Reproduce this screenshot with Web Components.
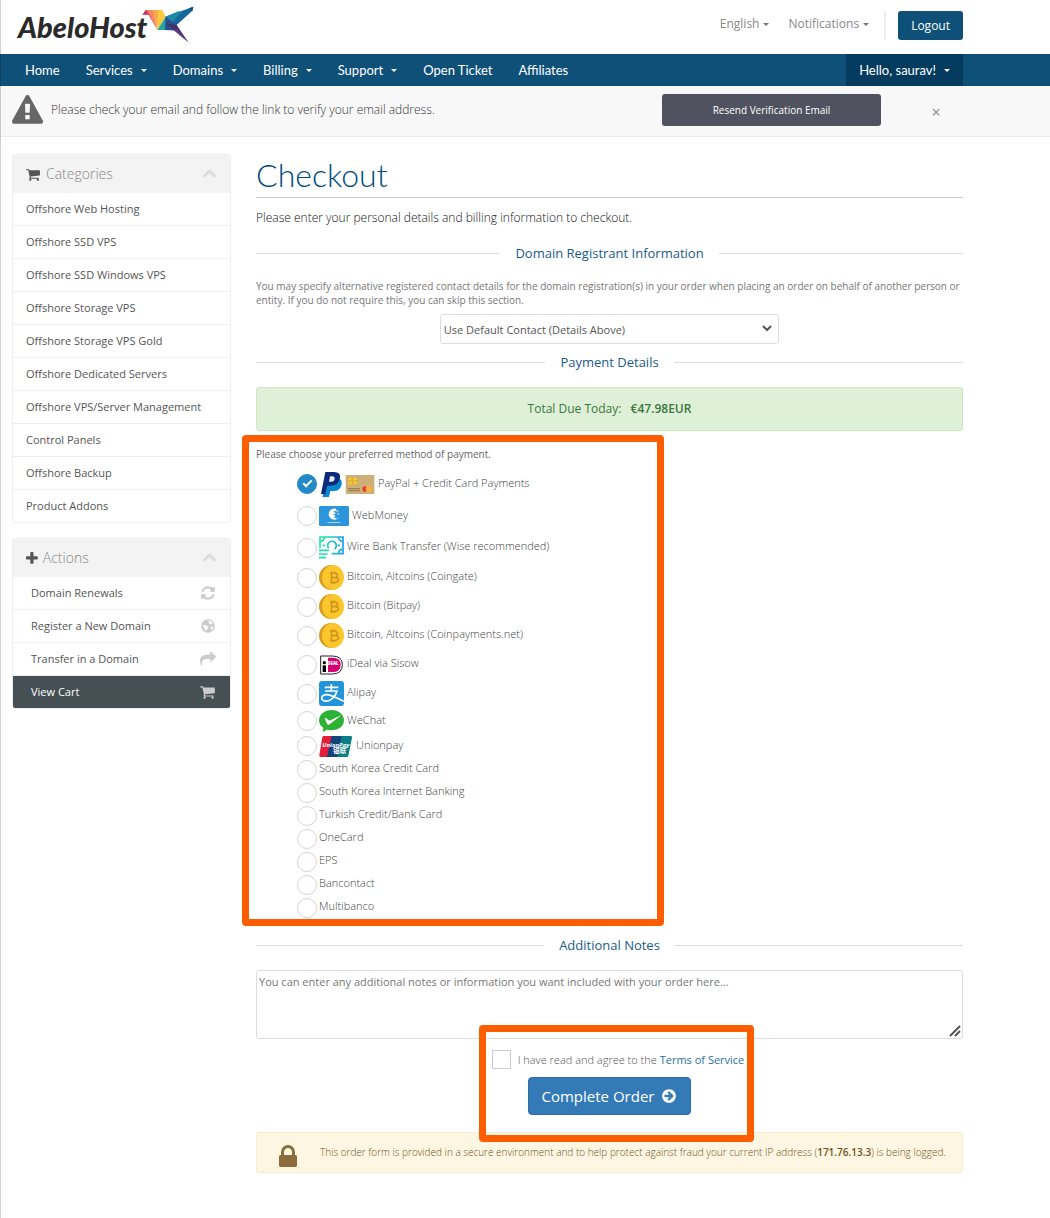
<!DOCTYPE html>
<html lang="en">
<head>
<meta charset="utf-8">
<meta name="viewport" content="width=device-width, initial-scale=1">
<title>Checkout - AbeloHost</title>
<style>
  body {
    margin: 0;
    background: #fff;
    color: #333;
    font-family: "Open Sans", "Noto Sans", sans-serif;
    font-size: 12px;
    line-height: 18px;
  }
</style>
</head>
<body>
<checkout-page></checkout-page>

<script>
const ICONS = {
  cart: 'M640 1536q0 52-38 90t-90 38-90-38-38-90 38-90 90-38 90 38 38 90zm896 0q0 52-38 90t-90 38-90-38-38-90 38-90 90-38 90 38 38 90zm128-1088v512q0 24-16.500 42.500t-40.500 21.500l-1044 122q13 60 13 70 0 16-24 64h920q26 0 45 19t19 45-19 45-45 19h-1024q-26 0-45-19t-19-45q0-11 8-31.500t16-36 21.500-40 15.500-29.500l-177-823h-204q-26 0-45-19t-19-45 19-45 45-19h256q16 0 28.500 6.500t19.500 15.500 13 24.500 8 26 5.500 29.500 4.500 26h1201q26 0 45 19t19 45z',
  plus: 'M1600 736v192q0 40-28 68t-68 28h-416v416q0 40-28 68t-68 28h-192q-40 0-68-28t-28-68v-416h-416q-40 0-68-28t-28-68v-192q0-40 28-68t68-28h416v-416q0-40 28-68t68-28h192q40 0 68 28t28 68v416h416q40 0 68 28t28 68z',
  refresh: 'M1639 1056q0 5-1 7-64 268-268 434.500t-478 166.500q-146 0-282.500-55t-243.500-157l-129 129q-19 19-45 19t-45-19-19-45v-448q0-26 19-45t45-19h448q26 0 45 19t19 45-19 45l-137 137q71 66 161 102t187 36q134 0 250-65t186-179q11-17 53-117 8-23 30-23h192q13 0 22.500 9.500t9.500 22.500zm25-800v448q0 26-19 45t-45 19h-448q-26 0-45-19t-19-45 19-45l138-138q-148-137-349-137-134 0-250 65t-186 179q-11 17-53 117-8 23-30 23h-199q-13 0-22.500-9.500t-9.500-22.500v-7q65-268 270-434.500t480-166.500q146 0 284 55.500t245 156.500l130-129q19-19 45-19t45 19 19 45z',
  globe: 'M896 128a768 768 0 1 0 0 1536a768 768 0 1 0 0-1536zM980 290L1180 340L1330 450L1440 620L1300 700L1180 640L1080 720L960 620L1060 500L940 420zM400 760L620 800L800 900L960 1020L880 1180L740 1280L700 1440L560 1360L520 1160L390 1000L340 860zM1240 980L1430 900L1480 1000L1400 1220L1260 1360L1180 1180z',
  share: 'M1792 640q0 26-19 45l-512 512q-19 19-45 19t-45-19-19-45v-256h-224q-98 0-175.500 6t-154 21.500-133 42.500-105.500 69.500-80 101-48.500 138.500-17.500 181q0 55 5 123 0 6 2.500 23.500t2.500 26.500q0 15-8.500 25t-23.500 10q-16 0-28-17-7-9-13-22t-13.500-30-10.500-24q-127-285-127-451 0-199 53-333 162-403 875-403h224v-256q0-26 19-45t45-19 45 19l512 512q19 19 19 45z',
  warning: 'M1024 1375v-190q0-14-9.500-23.500t-22.500-9.500h-192q-13 0-22.500 9.500t-9.500 23.500v190q0 14 9.500 23.500t22.500 9.500h192q13 0 22.500-9.500t9.500-23.500zm-2-374l18-459q0-12-10-19-13-11-24-11h-220q-11 0-24 11-10 7-10 21l17 457q0 10 10 16.500t24 6.500h185q14 0 23.500-6.500t10.500-16.500zm-14-934l768 1408q35 63-2 126-17 29-46.500 46t-63.500 17h-1536q-34 0-63.500-17t-46.500-46q-37-63-2-126l768-1408q17-31 47-49t65-18 65 18 47 49z',
  lock: 'M640 768h512v-192q0-106-75-181t-181-75-181 75-75 181v192zm832 96v576q0 40-28 68t-68 28h-960q-40 0-68-28t-28-68v-576q0-40 28-68t68-28h32v-192q0-184 132-316t316-132 316 132 132 316v192h32q40 0 68 28t28 68z',
  arrow: 'M1413 896q0-27-18-45l-91-91-362-362q-18-18-45-18t-45 18l-91 91q-18 18-18 45t18 45l189 189h-502q-26 0-45 19t-19 45v128q0 26 19 45t45 19h502l-189 189q-18 18-18 45t18 45l91 91q18 18 45 18t45-18l362-362 91-91q18-18 18-45zm251 0q0 209-103 385.500t-279.500 279.500-385.500 103-385.500-103-279.500-279.500-103-385.500 103-385.500 279.500-279.500 385.500-103 385.500 103 279.500 279.500 103 385.500z',
  chevron: 'M1683 1331l-166 165q-19 19-45 19t-45-19l-531-531-531 531q-19 19-45 19t-45-19l-166-165q-19-19-19-45.500t19-45.500l742-741q19-19 45-19t45 19l742 741q19 19 19 45.500t-19 45.500z'
};

// Glyphs that are narrower than the square box
const ICON_BOXES = { plus: '192 0 1408 1792' };

// Single colour icon, sized with --icon-size and coloured by the current text colour
class FaIcon extends HTMLElement {
  constructor() {
    super();
    this.attachShadow({ mode: 'open' });
  }

  connectedCallback() {
    const name = this.getAttribute('name');
    this.shadowRoot.innerHTML = `
      <style>
        :host { display: inline-block; }
        svg { display: block; height: var(--icon-size, 15px); fill: currentColor; }
      </style>
      <svg viewBox="${ICON_BOXES[name] || '0 0 1792 1792'}" aria-hidden="true"><path fill-rule="evenodd" d="${ICONS[name]}"/></svg>
    `;
  }
}
customElements.define('fa-icon', FaIcon);

// Logo, language and notification menus, logout
class SiteHeader extends HTMLElement {
  constructor() {
    super();
    this.attachShadow({ mode: 'open' });
  }

  connectedCallback() {
    this.shadowRoot.innerHTML = `
      <style>
        :host { display: block; }
        .bar { display: flex; align-items: flex-start; justify-content: space-between; max-width: 963px; height: 54px; }
        .logo { display: flex; padding: 6px 0 0 18px; color: #2b2a2b; text-decoration: none; font: italic 900 29px/41px Lato, sans-serif; }
        .logo svg { width: 52px; height: 37px; margin-left: -5px; }
        .tools { display: flex; align-items: flex-start; padding-top: 11px; }
        .menu { display: flex; align-items: center; gap: 4px; margin-right: 19px; padding: 0; border: 0; background: none; color: #888; font: inherit; line-height: 26px; }
        .menu::after { content: ""; border: 3px solid transparent; border-top-color: #777; border-bottom: 0; }
        .logout { margin-left: -4px; padding-left: 12px; border-left: 2px solid #eee; }
        .logout button { display: block; height: 29px; padding: 0 13px; border: 0; border-radius: 3px; background: #0f5078; color: #fff; font: inherit; }
      </style>
      <div class="bar">
        <a class="logo" href="#">AbeloHost<svg viewBox="426 18 156 111" aria-hidden="true">
          <path fill="#c9285e" d="M427 44l10-14 14 14z"/>
          <path fill="#ee5a66" d="M437 30h8l27 60z"/>
          <path fill="#f58a5c" d="M444 30h16l12 60z"/>
          <path fill="#f9a74a" d="M459 30h16l-3 60z"/>
          <path fill="#fbc93c" d="M474 30h13l10 20-25 40z"/>
          <path fill="#25a8a2" d="M497 50l-25 40h23l22-20z"/>
          <path fill="#1c86a6" d="M497 50l42-18-22 40-22 18z"/>
          <path fill="#17669c" d="M497 50l83-30-3 12-47 43-22-9z"/>
          <path fill="#1c8aa5" d="M497 50l48-17-28 36z"/>
          <path fill="#164a83" d="M566 25l14-5-3 14z"/>
          <path fill="#2f4d8c" d="M497 50l33 25 8 17-43-2z"/>
          <path fill="#443070" d="M500 72l30 3 35 52-44-37z"/>
          <path fill="#6b3c7c" d="M521 90l10-2 34 39z"/>
        </svg></a>
        <div class="tools">
          <button class="menu">English</button>
          <button class="menu">Notifications</button>
          <div class="logout"><button>Logout</button></div>
        </div>
      </div>
    `;
  }
}
customElements.define('site-header', SiteHeader);

// Main navigation bar
class SiteNav extends HTMLElement {
  constructor() {
    super();
    this.attachShadow({ mode: 'open' });
  }

  connectedCallback() {
    const items = [['Home'], ['Services', 1], ['Domains', 1], ['Billing', 1], ['Support', 1], ['Open Ticket'], ['Affiliates']];
    const link = ([label, menu]) => `<a href="#"${menu ? ' class="menu"' : ''}>${label}</a>`;
    this.shadowRoot.innerHTML = `
      <style>
        :host { display: block; background: #0f5078; font: 13px/32px Lato, sans-serif; }
        nav { display: flex; max-width: 951px; margin-left: 12px; }
        a { display: flex; align-items: center; gap: 8px; padding: 0 13px; color: #fff; text-decoration: none; }
        .menu::after { content: ""; border: 3px solid transparent; border-top-color: #fff; border-bottom: 0; }
        .user { margin-left: auto; }
        .user a { background: #053b5e; }
      </style>
      <nav>${items.map(link).join('')}<div class="user">${link(['Hello, saurav!', 1])}</div></nav>
    `;
  }
}
customElements.define('site-nav', SiteNav);

// Reminder to verify the account email
class VerifyBanner extends HTMLElement {
  constructor() {
    super();
    this.attachShadow({ mode: 'open' });
  }

  connectedCallback() {
    this.shadowRoot.innerHTML = `
      <style>
        :host { display: block; background: #f8f8f8; border-bottom: 1px solid #e9e9e9; }
        .row { display: flex; align-items: flex-start; max-width: 951px; height: 50px; margin-left: 12px; }
        fa-icon { --icon-size: 31px; margin-top: 9px; color: #666; }
        p { flex: 1; margin: 15px 0 0 8px; font-weight: 300; }
        .resend { width: 219px; height: 32px; margin-top: 8px; border: 0; border-radius: 3px; background: #50525f; color: #fff; font: 10px "Open Sans", sans-serif; }
        .close { width: 20px; margin: 15px 17px 0 45px; padding: 0; border: 0; background: none; color: #888; font: 16px/22px "Open Sans", sans-serif; }
      </style>
      <div class="row">
        <fa-icon name="warning"></fa-icon>
        <p><slot></slot></p>
        <button class="resend">Resend Verification Email</button>
        <button class="close" aria-label="Close">×</button>
      </div>
    `;
  }
}
customElements.define('verify-banner', VerifyBanner);

// Sidebar panel: a header with an icon over a list of links
class SidePanel extends HTMLElement {
  constructor() {
    super();
    this.attachShadow({ mode: 'open' });
  }

  connectedCallback() {
    this.shadowRoot.innerHTML = `
      <style>
        :host { display: block; border: 1px solid #eee; border-radius: 3px; overflow: hidden; }
        header { display: flex; align-items: center; height: 38px; padding: 0 13px; background: #f3f3f3; color: #555; }
        h3 { flex: 1; margin: 0 0 0 5px; color: #888; font-size: 14px; font-weight: 300; }
        .toggle { padding: 0; border: 0; background: none; color: #ddd; }
      </style>
      <header>
        <fa-icon name="${this.getAttribute('icon')}"></fa-icon>
        <h3>${this.getAttribute('heading')}</h3>
        <button class="toggle" aria-label="Toggle"><fa-icon name="chevron"></fa-icon></button>
      </header>
      <slot></slot>
    `;
  }
}
customElements.define('side-panel', SidePanel);

// One link of a side panel, with an optional icon at its end
class PanelLink extends HTMLElement {
  constructor() {
    super();
    this.attachShadow({ mode: 'open' });
  }

  connectedCallback() {
    const icon = this.getAttribute('icon');
    this.shadowRoot.innerHTML = `
      <style>
        :host { display: block; border-bottom: 1px solid #eee; font-size: 11px; }
        :host(:last-child) { border-bottom: 0; }
        :host([active]) { background: #464f54; }
        a { display: flex; align-items: center; justify-content: space-between; height: 32px; padding: 0 13px; color: #555; text-decoration: none; }
        :host([icon]) a { padding: 0 14px 0 18px; }
        :host([active]) a { color: #fff; }
        fa-icon { color: #ccc; --icon-size: 16px; }
      </style>
      <a href="#"><slot></slot>${icon ? `<fa-icon name="${icon}"></fa-icon>` : ''}</a>
    `;
  }
}
customElements.define('panel-link', PanelLink);

// Centred heading between two rules
class SectionTitle extends HTMLElement {
  constructor() {
    super();
    this.attachShadow({ mode: 'open' });
  }

  connectedCallback() {
    this.shadowRoot.innerHTML = `
      <style>
        :host { display: block; }
        h2 { display: flex; align-items: center; gap: 15px; margin: 0; color: #1a5a88; font-size: 13px; font-weight: 400; line-height: 18px; }
        h2::before, h2::after { content: ""; flex: 1; border-top: 1px solid #ddd; }
      </style>
      <h2><slot></slot></h2>
    `;
  }
}
customElements.define('section-title', SectionTitle);

// Draws a thick marker frame over what it wraps
class MarkerFrame extends HTMLElement {
  constructor() {
    super();
    this.attachShadow({ mode: 'open' });
  }

  connectedCallback() {
    this.shadowRoot.innerHTML = `
      <style>
        :host { display: block; position: relative; }
        .frame { position: absolute; inset: var(--frame-inset, -12px); border: 7px solid #ff5e00; border-radius: 4px; pointer-events: none; z-index: 1; }
      </style>
      <slot></slot>
      <div class="frame"></div>
    `;
  }
}
customElements.define('marker-frame', MarkerFrame);

const COIN = `<svg width="25" height="25" viewBox="0 0 50 50" aria-hidden="true">
  <ellipse cx="24" cy="25" rx="24" ry="25" fill="#d99c1c"/>
  <ellipse cx="28" cy="25" rx="22" ry="25" fill="#fcc62d"/>
  <path fill="none" stroke="#cf921a" stroke-width="3" d="M22 16h9q6 1 6 5t-6 4h-7m7 0q8 1 8 5t-8 5h-9m3-19v19m1-22v3m5-3v3m-5 19v3m5-3v3"/>
</svg>`;

const METHODS = [
  { label: 'PayPal + Credit Card Payments', row: 32, art: `<svg width="56" height="25" viewBox="0 0 168 75" aria-hidden="true">
    <path fill="#0a86cc" d="M26 22h38q7 7 3 19-5 16-24 16h-9l-4 18h-20z"/>
    <path fill="#0b2a7a" d="M19 0h26q21 0 18 19-4 22-27 22h-12l-5 25h-13z"/>
    <path fill="#fff" d="M33 13l-3 16h7q9 0 10-9 0-7-8-7z" opacity=".9"/>
    <rect x="80" y="9" width="86" height="57" rx="2" fill="#cdb077"/>
    <rect x="88" y="18" width="26" height="19" rx="3" fill="#fbc92f"/>
    <path stroke="#b98a2a" stroke-width="2" d="M88 27h9m8 0h9M100 18v19"/>
    <path stroke="#6e5b36" stroke-width="2" d="M87 50h36M87 56h36"/>
    <circle cx="138" cy="51" r="8" fill="#e8392f"/><circle cx="149" cy="51" r="9" fill="#fbb03b"/>
  </svg>` },
  { label: 'WebMoney', row: 32, art: `<svg width="30" height="20" viewBox="0 0 90 60" aria-hidden="true">
    <rect width="90" height="60" rx="4" fill="#2d95dc"/>
    <path fill="#fff" d="M51 8a17 17 0 1 0 9 26l-7 4-9-5 6-2-8-7 9-1-8-7 9-1z"/>
    <path fill="#fff" d="M52 12l7 4-5 2zM55 21l7 3-6 2z"/>
    <text x="25" y="51" font-family="Open Sans, sans-serif" font-size="7" font-weight="700" fill="#fff">WebMoney</text>
  </svg>` },
  { label: 'Wire Bank Transfer (Wise recommended)', row: 31, art: `<svg width="25" height="23" viewBox="0 0 75 69" aria-hidden="true">
    <defs><linearGradient id="wire" gradientUnits="userSpaceOnUse" x1="0" y1="0" x2="75" y2="0"><stop offset="0" stop-color="#22ee9c"/><stop offset="1" stop-color="#1c9cf0"/></linearGradient></defs>
    <g fill="none" stroke="url(#wire)" stroke-width="5">
      <path d="M3 36V3h69v50H38"/><path d="M16 4q0 12-12 12M59 4q0 12 12 12M59 52q0-12 12-12"/>
      <path d="M29 37a13 13 0 1 1 18 2"/><path d="M11 28h7M56 28h7"/>
    </g>
    <path fill="none" stroke="#1fe0a8" stroke-width="5" d="M0 43h30M0 54h26M0 65h21"/>
  </svg>` },
  { label: 'Bitcoin, Altcoins (Coingate)', row: 29, art: COIN },
  { label: 'Bitcoin (Bitpay)', row: 29, art: COIN },
  { label: 'Bitcoin, Altcoins (Coinpayments.net)', row: 29, art: COIN },
  { label: 'iDeal via Sisow', row: 29, art: `<svg width="25" height="20" viewBox="0 0 75 60" aria-hidden="true">
    <path fill="#fff" stroke="#222" stroke-width="3" d="M5 3h35q30 0 30 26 0 28-30 28H5z"/>
    <circle cx="16" cy="23" r="5"/><path d="M11 31h10v20H11z"/>
    <path fill="#d50072" d="M27 8h14q24 0 24 21 0 22-24 22H27z"/>
    <text x="25" y="29" font-family="Open Sans, sans-serif" font-size="13" font-weight="800" fill="#fff">DEAL</text>
  </svg>` },
  { label: 'Alipay', row: 29, art: `<svg width="25" height="25" viewBox="0 0 75 75" aria-hidden="true">
    <rect width="75" height="75" rx="9" fill="#2294da"/>
    <path fill="none" stroke="#fff" stroke-width="5" d="M17 19h41M37 9v20M18 30h36q-5 17-17 25-11 7-20 5-11-3-8-12 4-8 15-7 12 1 51 20"/>
  </svg>` },
  { label: 'WeChat', row: 26, art: `<svg width="25" height="22" viewBox="0 0 75 66" aria-hidden="true">
    <path fill="#2fb135" d="M38 0C17 0 0 14 0 31q0 14 13 23l-2 12 13-7q7 2 14 2c21 0 37-13 37-30S59 0 38 0z"/>
    <path fill="#fff" d="M17 25q2-2 5 0l9 7 37-17-36 28q-5 3-8-2z"/>
  </svg>` },
  { label: 'Unionpay', row: 24, art: `<svg width="34" height="21" viewBox="0 0 102 63" aria-hidden="true">
    <path fill="#e11f3a" d="M14 0h26L27 63H5q-5 0-4-6L10 4q1-4 4-4z"/>
    <path fill="#12437a" d="M38 0h32L57 63H24z"/>
    <path fill="#087f84" d="M68 0h28q4 0 3 5L88 59q-1 4-5 4H55z"/>
    <g font-family="Open Sans, Noto Sans CJK SC, sans-serif" font-weight="700" fill="#fff">
      <text x="10" y="32" font-size="18" font-style="italic">UnionPay</text>
      <text x="42" y="52" font-size="20">银联</text>
    </g>
  </svg>` },
  { label: 'South Korea Credit Card' },
  { label: 'South Korea Internet Banking' },
  { label: 'Turkish Credit/Bank Card' },
  { label: 'OneCard' },
  { label: 'EPS' },
  { label: 'Bancontact' },
  { label: 'Multibanco' }
];

// Radio list of the payment methods
class PaymentMethods extends HTMLElement {
  constructor() {
    super();
    this.attachShadow({ mode: 'open' });
  }

  connectedCallback() {
    const rows = METHODS.map((m, i) => `
      <label style="--row: ${m.row || 23}px">
        <input type="radio" name="payment"${i === 0 ? ' checked' : ''}>${m.art || ''}<span>${m.label}</span>
      </label>`).join('');
    this.shadowRoot.innerHTML = `
      <style>
        :host { display: block; }
        fieldset { min-width: 0; margin: 0; padding: 0; border: 0; }
        legend { margin-bottom: 7px; padding: 0; color: #666; font-size: 10px; line-height: 14px; }
        label { display: flex; align-items: center; height: var(--row); padding-left: 41px; color: #444; font-size: 11px; font-weight: 300; }
        input { appearance: none; flex: none; display: grid; place-items: center; width: 20px; height: 20px; margin: 0 2px 0 0; border: 1px solid #d4d4d4; border-radius: 50%; background: #fff; }
        input:checked { border-color: #2489c5; background: #2489c5; }
        input:checked::after { content: ""; width: 7px; height: 3px; margin-bottom: 3px; border: solid #fff; border-width: 0 0 2px 2px; transform: rotate(-45deg); }
        svg { flex: none; margin-right: 3px; }
        span { padding-bottom: 3px; }
      </style>
      <fieldset><legend>Please choose your preferred method of payment.</legend>${rows}</fieldset>
    `;
  }
}
customElements.define('payment-methods', PaymentMethods);

// Everything in the main column
class CheckoutForm extends HTMLElement {
  constructor() {
    super();
    this.attachShadow({ mode: 'open' });
  }

  connectedCallback() {
    this.shadowRoot.innerHTML = `
      <style>
        :host { display: block; }
        * { box-sizing: border-box; }
        a { color: #2a6f9e; text-decoration: none; }
        p { margin: 0; }
        h1 { margin: 0 0 11px; padding-bottom: 2px; border-bottom: 1px solid #ccc; color: #004a80; font: 300 32px/41px Lato, sans-serif; }
        .intro { margin-bottom: 17px; color: #111; font-weight: 300; }
        .note { margin: 17px 0 7px; color: #777; font-size: 10px; line-height: 14px; }
        .select { position: relative; width: 48%; margin: 0 auto 9px; }
        select { appearance: none; display: block; width: 100%; height: 30px; padding: 0 3px; border: 1px solid #ddd; border-radius: 3px; background: #fff; color: #555; font: 11px "Open Sans", sans-serif; }
        .select svg { position: absolute; right: 6px; top: 11px; pointer-events: none; }
        .total { margin: 16px 0; padding: 12px; border: 1px solid #d0e6c3; border-radius: 3px; background: #dff0d8; color: #3c763d; text-align: center; }
        .total strong { margin-left: 6px; font-weight: 600; }
        .methods { --frame-inset: -12px 299px -7px -14px; margin-bottom: 17px; }
        .notes { position: relative; margin: 16px 0 11px; }
        textarea { display: block; width: 100%; height: 69px; padding: 2px; border: 1px solid #ddd; border-radius: 3px; resize: none; font: 11px/18px "Open Sans", sans-serif; }
        textarea::placeholder { color: #777; }
        .notes svg { position: absolute; right: 2px; bottom: 2px; }
        .submit { --frame-inset: -25px -10px -27px 4px; width: fit-content; margin: 0 auto 17px; text-align: center; }
        .terms { display: flex; align-items: center; gap: 7px; padding-left: 17px; color: #555; font-size: 11px; font-weight: 300; }
        .terms a { font-weight: 400; }
        input { appearance: none; width: 19px; height: 19px; margin: 0; border: 1px solid #ccc; background: #fff; }
        .order { display: inline-flex; align-items: center; gap: 7px; height: 38px; margin-top: 8px; padding: 0 13px; border: 1px solid #2e6da4; border-radius: 4px; background: #337ab7; color: #fff; font: 15px "Open Sans", sans-serif; --icon-size: 16px; }
        .secure { display: flex; align-items: flex-start; gap: 18px; padding: 10px 10px 11px 17px; border: 1px solid #faebcc; border-radius: 3px; background: #fcf6e2; color: #6f5526; font-size: 10px; font-weight: 300; }
        .secure strong { font-weight: 600; }
        .secure fa-icon { flex: none; --icon-size: 28px; margin-bottom: -10px; color: #8a6d3b; }
      </style>
      <h1>Checkout</h1>
      <p class="intro">Please enter your personal details and billing information to checkout.</p>

      <section-title>Domain Registrant Information</section-title>
      <p class="note">You may specify alternative registered contact details for the domain registration(s) in your order when placing an order on behalf of another person or entity. If you do not require this, you can skip this section.</p>
      <div class="select">
        <select aria-label="Registrant contact"><option>Use Default Contact (Details Above)</option></select>
        <svg width="12" height="8" viewBox="0 0 12 8" aria-hidden="true"><path d="M2 1l4 4 4-4" fill="none" stroke="#555" stroke-width="2"/></svg>
      </div>

      <section-title>Payment Details</section-title>
      <p class="total">Total Due Today: <strong>€47.98EUR</strong></p>
      <marker-frame class="methods"><payment-methods></payment-methods></marker-frame>

      <section-title>Additional Notes</section-title>
      <div class="notes">
        <textarea aria-label="Additional notes" placeholder="You can enter any additional notes or information you want included with your order here..."></textarea>
        <svg width="12" height="12" viewBox="0 0 12 12" aria-hidden="true"><path d="M1 11L11 1M6 11l5-5" stroke="#555" stroke-width="2"/></svg>
      </div>

      <marker-frame class="submit">
        <div class="terms">
          <input type="checkbox" id="terms">
          <label for="terms">I have read and agree to the <a href="#">Terms of Service</a></label>
        </div>
        <button class="order">Complete Order <fa-icon name="arrow"></fa-icon></button>
      </marker-frame>

      <div class="secure">
        <fa-icon name="lock"></fa-icon>
        <p>This order form is provided in a secure environment and to help protect against fraud your current IP address (<strong>171.76.13.3</strong>) is being logged.</p>
      </div>
    `;
  }
}
customElements.define('checkout-form', CheckoutForm);

// Page shell
class CheckoutPage extends HTMLElement {
  constructor() {
    super();
    this.attachShadow({ mode: 'open' });
  }

  connectedCallback() {
    this.shadowRoot.innerHTML = `
      <style>
        :host { display: block; position: relative; min-height: 100vh; }
        :host::before { content: ""; position: absolute; inset: 0 auto 0 0; width: 1px; background: rgba(0, 0, 0, .18); }
        main { display: grid; grid-template-columns: 219px minmax(0, 1fr); gap: 25px; align-items: start; max-width: 951px; margin-left: 12px; padding: 17px 0 20px; }
        aside { display: grid; gap: 15px; }
      </style>
      <site-header></site-header>
      <site-nav></site-nav>
      <verify-banner>Please check your email and follow the link to verify your email address.</verify-banner>
      <main>
        <aside>
          <side-panel icon="cart" heading="Categories">
            <panel-link>Offshore Web Hosting</panel-link>
            <panel-link>Offshore SSD VPS</panel-link>
            <panel-link>Offshore SSD Windows VPS</panel-link>
            <panel-link>Offshore Storage VPS</panel-link>
            <panel-link>Offshore Storage VPS Gold</panel-link>
            <panel-link>Offshore Dedicated Servers</panel-link>
            <panel-link>Offshore VPS/Server Management</panel-link>
            <panel-link>Control Panels</panel-link>
            <panel-link>Offshore Backup</panel-link>
            <panel-link>Product Addons</panel-link>
          </side-panel>
          <side-panel icon="plus" heading="Actions">
            <panel-link icon="refresh">Domain Renewals</panel-link>
            <panel-link icon="globe">Register a New Domain</panel-link>
            <panel-link icon="share">Transfer in a Domain</panel-link>
            <panel-link icon="cart" active>View Cart</panel-link>
          </side-panel>
        </aside>
        <checkout-form></checkout-form>
      </main>
    `;
  }
}
customElements.define('checkout-page', CheckoutPage);
</script>
</body>
</html>
